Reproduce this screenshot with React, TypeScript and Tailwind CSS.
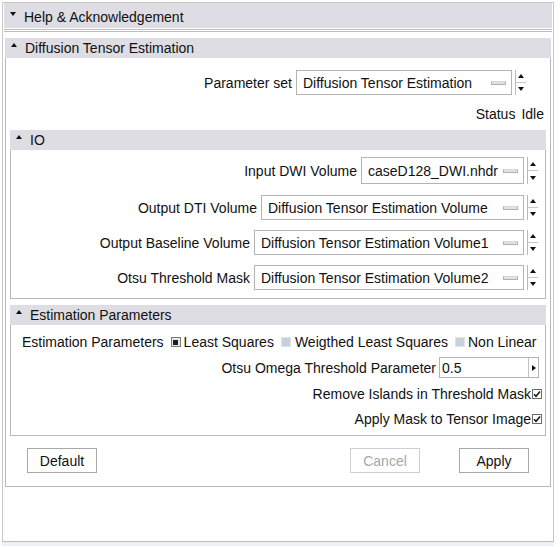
import React from 'react';

const font = "font-['Liberation_Sans','Arial',sans-serif]";

function UpTri({ className = '' }: { className?: string }) {
  return <span className={`block w-0 h-0 border-x-[3px] border-x-transparent border-b-[4px] border-b-[#111] ${className}`} />;
}

function DownTri({ className = '' }: { className?: string }) {
  return <span className={`block w-0 h-0 border-x-[3px] border-x-transparent border-t-[4px] border-t-[#111] ${className}`} />;
}

function SectionHeader({ title, open = true, className = '' }: { title: string; open?: boolean; className?: string }) {
  return (
    <div className={`flex items-center bg-[#dedde3] ${className}`}>
      {open ? <UpTri className="mb-[6px]" /> : <DownTri className="mb-[6px]" />}
      <span className="ml-[8px] text-[14px] leading-[16px] text-[#111]">{title}</span>
    </div>
  );
}

function Spinner({ className = 'h-[25px]' }: { className?: string }) {
  return (
    <div className={`flex flex-col w-[11px] border-l border-[#b8b8b8] ml-[3px] ${className}`}>
      <div className="flex-1 flex items-center justify-center border-b border-[#c8c8c8]">
        <UpTri />
      </div>
      <div className="flex-1 flex items-center justify-center">
        <DownTri />
      </div>
    </div>
  );
}

function Combo({ value, className, tall = false }: { value: string; className: string; tall?: boolean }) {
  const h = tall ? 'h-[27px]' : 'h-[25px]';
  return (
    <div className="flex items-center">
      <div className={`flex items-center border border-[#b4b4b4] bg-white pl-[6px] pr-[5px] ${h} ${className}`}>
        <span className="text-[14px] leading-[16px] text-[#111] whitespace-nowrap">{value}</span>
        <span className="flex-1 min-w-[4px]" />
        <span className="block shrink-0 w-[15px] h-[4px] bg-[#e2e2e2] border border-[#b0b0b0] border-t-[#d8d8d8]" />
      </div>
      <Spinner className={h} />
    </div>
  );
}

function Row({ label, children }: { label: string; children: React.ReactNode }) {
  return (
    <div className="flex items-center justify-end">
      <span className="text-[14px] leading-[16px] text-[#111] mr-[4px] whitespace-nowrap">{label}</span>
      {children}
    </div>
  );
}

function Radio({ checked }: { checked: boolean }) {
  return checked ? (
    <span className="flex items-center justify-center w-[10px] h-[10px] border border-[#7c7c7c] bg-[#e6e6ec]">
      <span className="block w-[5px] h-[5px] bg-[#1c1c1c]" />
    </span>
  ) : (
    <span className="block w-[10px] h-[10px] bg-[#c8d0dd] border border-[#dfe4ec]" />
  );
}

function Check() {
  return (
    <span className="flex items-center justify-center w-[10px] h-[10px] border border-[#6c6c6c] bg-white">
      <svg width="8" height="8" viewBox="0 0 8 8">
        <path d="M1 4.2 L3 6.3 L7 1.5" fill="none" stroke="#1a1a1a" strokeWidth="1.6" />
      </svg>
    </span>
  );
}

function Button({ label, disabled = false }: { label: string; disabled?: boolean }) {
  return (
    <div
      className={`flex items-center justify-center h-[25px] w-[70px] border bg-white text-[14px] leading-[16px] ${
        disabled ? 'border-[#cfcfcf] text-[#a8a8a8]' : 'border-[#a8a8a8] text-[#111]'
      }`}
    >
      {label}
    </div>
  );
}

export default function App() {
  return (
    <div className={`w-[560px] h-[547px] bg-white pt-[2px] pl-[2px] ${font}`}>
      <div className="w-[552px] h-[540px] border border-[#c8c8c8] border-b-[#bcbcbc] px-[1px] pt-0 flex flex-col">
        {/* Help & Acknowledgement (collapsed) */}
        <SectionHeader title="Help & Acknowledgement" open={false} className="h-[25px] pl-[6px] pt-[3px]" />
        <div className="mt-[1px] h-[3px] border-y border-[#bdbdbd]" />

        {/* Diffusion Tensor Estimation */}
        <div className="mt-[6px] mx-[1px]">
          <SectionHeader title="Diffusion Tensor Estimation" className="h-[20px] pl-[6px]" />
          <div className="border-x border-b border-[#b8b8b8] flex flex-col pt-[12px] pb-[13px]">
            <div className="pr-[24px]">
              <Row label="Parameter set">
                <Combo value="Diffusion Tensor Estimation" className="w-[216px]" />
              </Row>
            </div>
            <div className="mt-[11px] pr-[6px] flex justify-end text-[14px] leading-[16px] text-[#111]">
              <span>Status</span>
              <span className="ml-[6px]">Idle</span>
            </div>

            {/* IO */}
            <div className="mt-[8px] ml-[4px] mr-[4px]">
              <SectionHeader title="IO" className="h-[20px] pl-[6px]" />
              <div className="border-x border-b border-[#b8b8b8] pt-[7px] pb-[8px] pr-[7px] flex flex-col">
                <Row label="Input DWI Volume">
                  <Combo value="caseD128_DWI.nhdr" className="w-[163px]" tall />
                </Row>
                <div className="mt-[11px]">
                  <Row label="Output DTI Volume">
                    <Combo value="Diffusion Tensor Estimation Volume" className="w-[263px]" />
                  </Row>
                </div>
                <div className="mt-[10px]">
                  <Row label="Output Baseline Volume">
                    <Combo value="Diffusion Tensor Estimation Volume1" className="w-[270px]" />
                  </Row>
                </div>
                <div className="mt-[10px]">
                  <Row label="Otsu Threshold Mask">
                    <Combo value="Diffusion Tensor Estimation Volume2" className="w-[270px]" />
                  </Row>
                </div>
              </div>
            </div>

            {/* Estimation Parameters */}
            <div className="mt-[6px] ml-[4px] mr-[4px]">
              <SectionHeader title="Estimation Parameters" className="h-[20px] pl-[6px]" />
              <div className="border-x border-b border-[#b8b8b8] pt-[9px] pb-[8px] pl-[11px] pr-[3px] flex flex-col text-[14px] leading-[16px] text-[#111]">
                <div className="flex items-center whitespace-nowrap">
                  <span>Estimation Parameters</span>
                  <span className="ml-[7px]"><Radio checked /></span>
                  <span className="ml-[3px]">Least Squares</span>
                  <span className="ml-[7px]"><Radio checked={false} /></span>
                  <span className="ml-[4px]">Weigthed Least Squares</span>
                  <span className="ml-[7px]"><Radio checked={false} /></span>
                  <span className="ml-[3px]">Non Linear</span>
                </div>
                <div className="mt-[7px] flex items-center justify-end">
                  <span className="mr-[3px]">Otsu Omega Threshold Parameter</span>
                  <div className="flex items-stretch h-[21px] w-[100px] border border-[#b4b4b4] bg-white mr-[3px]">
                    <span className="flex-1 pl-[2px] flex items-center">0.5</span>
                    <span className="w-[10px] border-l border-[#c4c4c4] flex items-center justify-center">
                      <span className="block w-0 h-0 border-y-[3px] border-y-transparent border-l-[4px] border-l-[#111]" />
                    </span>
                  </div>
                </div>
                <div className="mt-[8px] flex items-center justify-end">
                  <span className="mr-[1px]">Remove Islands in Threshold Mask</span>
                  <Check />
                </div>
                <div className="mt-[9px] flex items-center justify-end">
                  <span className="mr-[1px]">Apply Mask to Tensor Image</span>
                  <Check />
                </div>
              </div>
            </div>

            {/* Buttons */}
            <div className="mt-[12px] flex items-center pl-[21px] pr-[21px]">
              <Button label="Default" />
              <span className="flex-1" />
              <Button label="Cancel" disabled />
              <span className="ml-[39px]">
                <Button label="Apply" />
              </span>
            </div>
          </div>
        </div>
      </div>
      <div className="w-[552px] h-[4px] bg-[#eef0f9]" />
    </div>
  );
}
